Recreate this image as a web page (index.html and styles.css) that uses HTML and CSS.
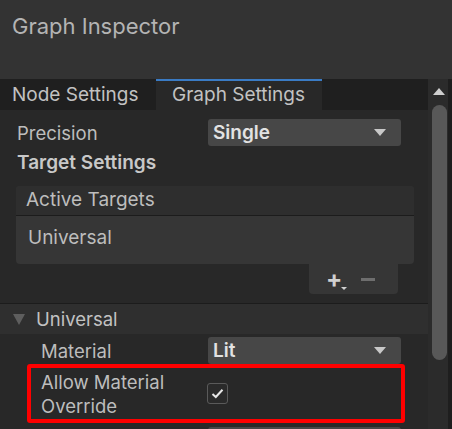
FILE: index.html
```html
<!DOCTYPE html>
<html>
<head>
<meta charset="utf-8">
<link rel="stylesheet" href="styles.css">
</head>
<body>
<div class="window">
  <div class="header"><span class="title">Graph Inspector</span></div>
  <div class="body">
    <div class="left">
      <div class="tabs">
        <div class="tab">Node Settings</div>
        <div class="tab active">Graph Settings</div>
      </div>
      <div class="content">
        <div class="row">
          <span class="label">Precision</span>
          <div class="dropdown"><span>Single</span><span class="caret"></span></div>
        </div>
        <div class="section">Target Settings</div>
        <div class="list">
          <div class="list-head">Active Targets</div>
          <div class="list-body">Universal</div>
        </div>
        <div class="list-foot">
          <div class="foot-box">
            <span class="plus">+<span class="mini-caret"></span></span>
            <span class="minus"></span>
          </div>
        </div>
        <div class="sep"></div>
        <div class="foldout"><span class="fold-tri"></span>Universal</div>
        <div class="row sub">
          <span class="label">Material</span>
          <div class="dropdown"><span>Lit</span><span class="caret"></span></div>
        </div>
        <div class="highlight">
          <span class="label">Allow Material<br>Override</span>
          <span class="checkbox">
            <svg width="13" height="11" viewBox="0 0 13 11"><path d="M1.5 6 L4.8 9 L11.5 1.8" fill="none" stroke="#e6e6e6" stroke-width="2"/></svg>
          </span>
        </div>
        <div class="row sub cut">
          <span class="label">Workflow Mode</span>
          <div class="dropdown"><span>Metallic</span><span class="caret"></span></div>
        </div>
      </div>
    </div>
    <div class="scrollbar">
      <div class="up"></div>
      <div class="thumb"></div>
    </div>
    <div class="edge"></div>
  </div>
</div>
</body>
</html>
```

FILE: styles.css
```css
* { box-sizing: border-box; }
html, body { margin: 0; padding: 0; }
body {
  background: #282828;
  font-family: Inter, "Noto Sans", sans-serif;
  color: #c4c4c4;
  width: 452px;
  height: 429px;
  overflow: hidden;
}
.window { width: 452px; height: 429px; display: flex; flex-direction: column; }
.header {
  height: 79px;
  background: #333333;
  padding: 13px 0 0 12px;
  flex: none;
}
.title { font-size: 22px; color: #b4b4b4; }
.body { flex: 1; display: flex; min-height: 0; }
.left { width: 428px; display: flex; flex-direction: column; }
.tabs { height: 31px; background: #1f1f1f; display: flex; flex: none; }
.tab {
  width: 156px;
  padding: 4px 0 0 12px;
  font-size: 19px;
  color: #c2c2c2;
  line-height: 23px;
}
.tab.active {
  width: 166px;
  background: #282828;
  border-top: 2px solid #3a7bc4;
  padding: 2px 0 0 16px;
}
.content { flex: 1; overflow: hidden; }
.row {
  display: flex;
  align-items: center;
  height: 27px;
  margin-top: 9px;
  padding-left: 17px;
}
.label { font-size: 18.5px; color: #bdbdbd; width: 191px; line-height: 24px; }
.dropdown {
  width: 193px;
  height: 27px;
  background: #474747;
  border-radius: 3px;
  display: flex;
  align-items: center;
  justify-content: space-between;
  padding: 0 15px 0 5px;
  font-size: 19px;
  font-weight: 600;
  color: #e2e2e2;
}
.caret {
  width: 0; height: 0;
  border-left: 6px solid transparent;
  border-right: 6px solid transparent;
  border-top: 7px solid #c8c8c8;
}
.section {
  padding: 5px 0 0 17px;
  font-size: 19px;
  font-weight: 600;
  color: #c8c8c8;
  height: 40px;
}
.list {
  margin-left: 16px;
  width: 398px;
  border-radius: 4px;
  overflow: hidden;
  background: #363636;
}
.list-head {
  height: 30px;
  background: #2e2e2e;
  border-bottom: 1px solid #1c1c1c;
  padding: 2px 0 0 10px;
  font-size: 19px;
  color: #bdbdbd;
}
.list-body {
  height: 48px;
  padding: 10px 0 0 12px;
  font-size: 19px;
  color: #bdbdbd;
}
.list-foot { display: flex; justify-content: flex-end; padding-right: 30px; }
.foot-box {
  width: 89px;
  height: 30px;
  background: #363636;
  border-radius: 0 0 4px 4px;
  display: flex;
  align-items: center;
  padding-left: 17px;
  gap: 19px;
}
.plus {
  position: relative;
  font-size: 24px;
  font-weight: 700;
  color: #d0d0d0;
  line-height: 24px;
}
.mini-caret {
  position: absolute;
  right: -5px;
  bottom: 1px;
  width: 0; height: 0;
  border-left: 3px solid transparent;
  border-right: 3px solid transparent;
  border-top: 3px solid #d0d0d0;
}
.minus { width: 14px; height: 3px; background: #6e6e6e; margin-top: 1px; }
.sep { height: 1px; background: #1c1c1c; margin-top: 9px; }
.foldout {
  height: 30px;
  background: #2f2f2f;
  display: flex;
  align-items: center;
  padding-left: 13px;
  font-size: 18.5px;
  color: #c2c2c2;
}
.fold-tri {
  width: 0; height: 0;
  border-left: 6px solid transparent;
  border-right: 6px solid transparent;
  border-top: 11px solid #5e5e5e;
  margin-right: 11px;
}
.row.sub { padding-left: 41px; margin-top: 3px; }
.row.sub .label { width: 167px; }
.highlight {
  margin-left: 27px;
  width: 378px;
  height: 59px;
  border: 4px solid #ff0000;
  border-radius: 3px;
  display: flex;
  align-items: center;
  padding-left: 10px;
}
.highlight .label { width: 166px; }
.checkbox {
  width: 21px;
  height: 21px;
  border: 1px solid #5a5a5a;
  border-radius: 3px;
  background: #2a2a2a;
  display: flex;
  align-items: center;
  justify-content: center;
}
.row.cut { margin-top: 4px; }
.scrollbar {
  width: 20px;
  background: #2b2b2b;
  display: flex;
  flex-direction: column;
  align-items: center;
  padding-top: 9px;
}
.up {
  width: 0; height: 0;
  border-left: 6px solid transparent;
  border-right: 6px solid transparent;
  border-bottom: 7px solid #cfcfcf;
  margin-left: 2px;
}
.thumb {
  margin-top: 10px;
  width: 15px;
  height: 255px;
  background: #585858;
  border-radius: 8px;
  margin-left: 2px;
}
.edge { width: 4px; background: #1e1e1e; }
```
